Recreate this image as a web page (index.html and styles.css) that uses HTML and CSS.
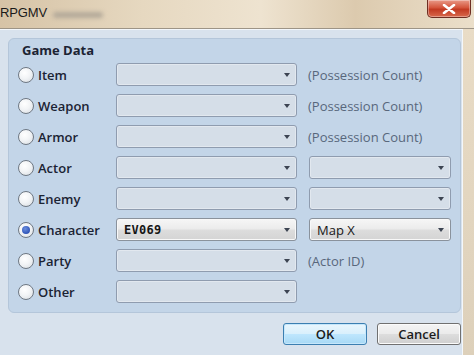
FILE: index.html
```html
<!DOCTYPE html>
<html>
<head>
<meta charset="utf-8">
<link rel="stylesheet" href="styles.css">
</head>
<body>
<div class="window">
  <div class="titlebar">
    <span class="title">RPGMV</span>
    <span class="blur"></span>
    <span class="close"><svg width="14" height="10" viewBox="0 0 14 10"><path d="M2 1 L12 9 M12 1 L2 9" stroke="#fff" stroke-width="2.6" stroke-linecap="round"/></svg></span>
  </div>
  <div class="body">
    <div class="client">
      <div class="group">
        <div class="legend">Game Data</div>
        <div class="rows">
          <div class="row"><span class="radio"></span><span class="label">Item</span><span class="combo"><i class="arrow"></i></span><span class="note">(Possession Count)</span></div>
          <div class="row"><span class="radio"></span><span class="label">Weapon</span><span class="combo"><i class="arrow"></i></span><span class="note">(Possession Count)</span></div>
          <div class="row"><span class="radio"></span><span class="label">Armor</span><span class="combo"><i class="arrow"></i></span><span class="note">(Possession Count)</span></div>
          <div class="row"><span class="radio"></span><span class="label">Actor</span><span class="combo"><i class="arrow"></i></span><span class="combo small"><i class="arrow"></i></span></div>
          <div class="row"><span class="radio"></span><span class="label">Enemy</span><span class="combo"><i class="arrow"></i></span><span class="combo small"><i class="arrow"></i></span></div>
          <div class="row"><span class="radio checked"></span><span class="label">Character</span><span class="combo active"><span class="val mono">EV069</span><i class="arrow"></i></span><span class="combo small active"><span class="val">Map X</span><i class="arrow"></i></span></div>
          <div class="row"><span class="radio"></span><span class="label">Party</span><span class="combo"><i class="arrow"></i></span><span class="note">(Actor ID)</span></div>
          <div class="row"><span class="radio"></span><span class="label">Other</span><span class="combo"><i class="arrow"></i></span></div>
        </div>
      </div>
      <div class="buttons">
        <span class="btn ok">OK</span>
        <span class="btn">Cancel</span>
      </div>
    </div>
    <div class="frame-right"></div>
  </div>
</div>
</body>
</html>
```

FILE: styles.css
```css
html, body {
  margin: 0;
  padding: 0;
}
body {
  width: 474px;
  height: 355px;
  overflow: hidden;
  background: #e6d8c2;
  font-family: "Open Sans", "DejaVu Sans", sans-serif;
}
.window {
  display: flex;
  flex-direction: column;
  height: 355px;
}
.titlebar {
  height: 28px;
  display: flex;
  align-items: flex-start;
  background: linear-gradient(90deg, #d6c3a6 0%, #e6d8c0 30%, #eee3d0 55%, #dccaae 75%, #ebdfca 100%);
  border-bottom: 1px solid #9d9486;
  position: relative;
}
.title {
  font-family: "Liberation Sans", Arial, sans-serif;
  font-size: 13px;
  color: #1a1a1a;
  margin-top: 5px;
  margin-left: 0;
  letter-spacing: -0.1px;
}
.blur {
  width: 50px;
  height: 6px;
  margin-top: 12px;
  margin-left: 6px;
  background: #b3a999;
  border-radius: 3px;
  filter: blur(2px);
}
.close {
  margin-left: auto;
  margin-right: 3px;
  width: 44px;
  height: 18px;
  border: 1px solid #6e2e22;
  border-top: none;
  border-radius: 0 0 5px 5px;
  background: linear-gradient(#e99a88 0%, #d4553c 45%, #c23a22 55%, #d8694c 100%);
  box-shadow: inset 0 0 0 1px rgba(255,255,255,0.35);
  display: flex;
  align-items: center;
  justify-content: center;
  box-sizing: border-box;
}
.body {
  flex: 1;
  display: flex;
}
.client {
  width: 463px;
  background: #d8e2ed;
  border-top: 1px solid #f3f7fb;
  border-right: 1px solid #f3f7fb;
  padding: 8px 0 0 8px;
  box-sizing: border-box;
  display: flex;
  flex-direction: column;
}
.frame-right {
  flex: 1;
  background: linear-gradient(#e9dcc6, #ddd0ba);
}
.group {
  width: 453px;
  height: 275px;
  box-sizing: border-box;
  background: #c3d5e8;
  border-radius: 6px;
  border: 1px solid #b4c6da;
  padding: 0 0 0 9px;
}
.legend {
  height: 20px;
  line-height: 22px;
  font-weight: 700;
  font-size: 13px;
  color: #1b2333;
  padding-left: 4px;
}
.rows {
  display: flex;
  flex-direction: column;
}
.row {
  height: 31px;
  display: grid;
  grid-template-columns: 16px 82px 181px 142px;
  column-gap: 0;
  align-items: center;
}
.radio {
  width: 16px;
  height: 16px;
  box-sizing: border-box;
  border-radius: 50%;
  border: 1px solid #6f7883;
  background: radial-gradient(circle at 40% 35%, #ffffff 0%, #f2f4f6 45%, #d6dbe0 100%);
  position: relative;
}
.radio.checked::after {
  content: "";
  position: absolute;
  left: 3px;
  top: 3px;
  width: 8px;
  height: 8px;
  border-radius: 50%;
  background: radial-gradient(circle at 40% 35%, #6b8fe0 0%, #2f55b8 70%, #243f90 100%);
}
.label {
  padding-left: 4px;
  font-size: 13px;
  font-weight: 600;
  color: #1b2333;
}
.combo {
  height: 23px;
  box-sizing: border-box;
  border: 1px solid #8f9caf;
  border-radius: 3px;
  background: #d5dee8;
  box-shadow: inset 0 0 0 1px #e2e8ef;
  display: flex;
  align-items: center;
  position: relative;
}
.combo.small {
  margin-left: 12px;
  width: 142px;
}
.combo.active {
  background: linear-gradient(#f6f6f6 0%, #ececec 45%, #dcdcdc 55%, #d4d4d4 100%);
  border-color: #8a929c;
  box-shadow: inset 0 0 0 1px #f8f8f8;
}
.val {
  padding-left: 7px;
  font-size: 13px;
  color: #161616;
}
.val.mono {
  font-family: "DejaVu Sans Mono", monospace;
  font-size: 12px;
  font-weight: 600;
  letter-spacing: 0.3px;
}
.arrow {
  position: absolute;
  right: 6px;
  top: 9px;
  width: 0;
  height: 0;
  border-left: 3.5px solid transparent;
  border-right: 3.5px solid transparent;
  border-top: 4px solid #3c4452;
}
.note {
  padding-left: 11px;
  font-size: 13px;
  color: #58677c;
  white-space: nowrap;
}
.buttons {
  display: flex;
  justify-content: flex-end;
  gap: 10px;
  margin-top: 10px;
  padding-right: 1px;
}
.btn {
  width: 84px;
  height: 22px;
  box-sizing: border-box;
  border: 1px solid #707070;
  border-radius: 3px;
  background: linear-gradient(#f4f4f4 0%, #ebebeb 48%, #dddddd 52%, #cfcfcf 100%);
  box-shadow: inset 0 0 0 1px #fbfbfb;
  display: flex;
  align-items: center;
  justify-content: center;
  font-size: 13px;
  font-weight: 600;
  color: #1b1b1b;
}
.btn.ok {
  border-color: #3c7fb1;
  background: linear-gradient(#eaf6fd 0%, #d9f0fc 48%, #bee6fd 52%, #a7d9f5 100%);
  box-shadow: inset 0 0 0 1px #c6e7fb;
}
```
